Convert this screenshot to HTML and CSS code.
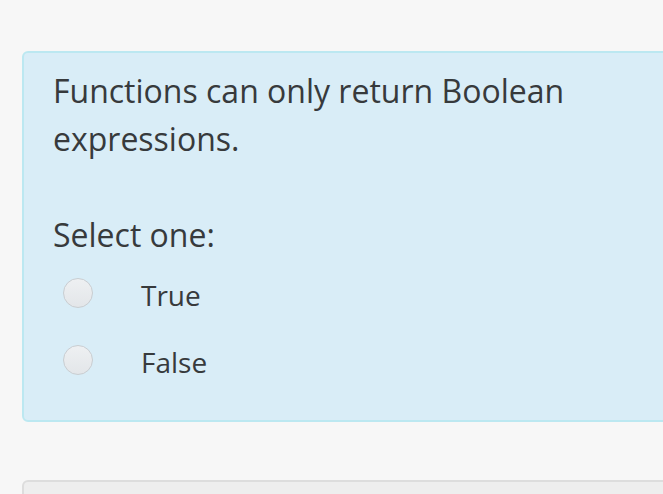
FILE: index.html
```html
<!DOCTYPE html>
<html>
<head>
<meta charset="utf-8">
<link rel="stylesheet" href="styles.css">
</head>
<body>
<div class="page">
  <div class="formulation">
    <div class="qtext">Functions can only return Boolean expressions.</div>
    <div class="ablock">
      <div class="prompt">Select one:</div>
      <div class="answer">
        <label class="opt"><span class="radio"></span><span class="label">True</span></label>
        <label class="opt"><span class="radio"></span><span class="label">False</span></label>
      </div>
    </div>
  </div>
  <div class="next"></div>
</div>
</body>
</html>
```
FILE: styles.css
```css
html, body { margin: 0; padding: 0; }
body {
  background: #f7f7f7;
  font-family: "Open Sans", "DejaVu Sans", sans-serif;
  color: #373a3c;
}
.page {
  width: 663px;
  height: 494px;
  overflow: hidden;
  box-sizing: border-box;
  padding: 51px 0 0 22px;
}
.formulation {
  width: 680px;
  box-sizing: border-box;
  height: 371px;
  background: #d9edf7;
  border: 2px solid #bce8f1;
  border-radius: 6px;
  padding: 14px 0 0 29px;
}
.qtext {
  font-size: 32px;
  line-height: 48px;
  width: 560px;
}
.ablock {
  margin-top: 48px;
}
.prompt {
  font-size: 32px;
  line-height: 48px;
}
.answer {
  display: flex;
  flex-direction: column;
  gap: 19px;
  margin-top: 12px;
  padding-left: 10px;
}
.opt {
  display: flex;
  align-items: center;
  height: 48px;
}
.radio {
  width: 28px;
  height: 28px;
  border-radius: 50%;
  border: 1px solid #c9cdd1;
  background: linear-gradient(#eef0f2, #e3e6e9);
  flex: none;
  margin-top: -4px;
}
.label {
  font-size: 28px;
  margin-left: 48px;
}
.next {
  margin-top: 58px;
  width: 680px;
  height: 40px;
  background: #eeeeee;
  border: 2px solid #dddddd;
  border-radius: 6px;
}
```
